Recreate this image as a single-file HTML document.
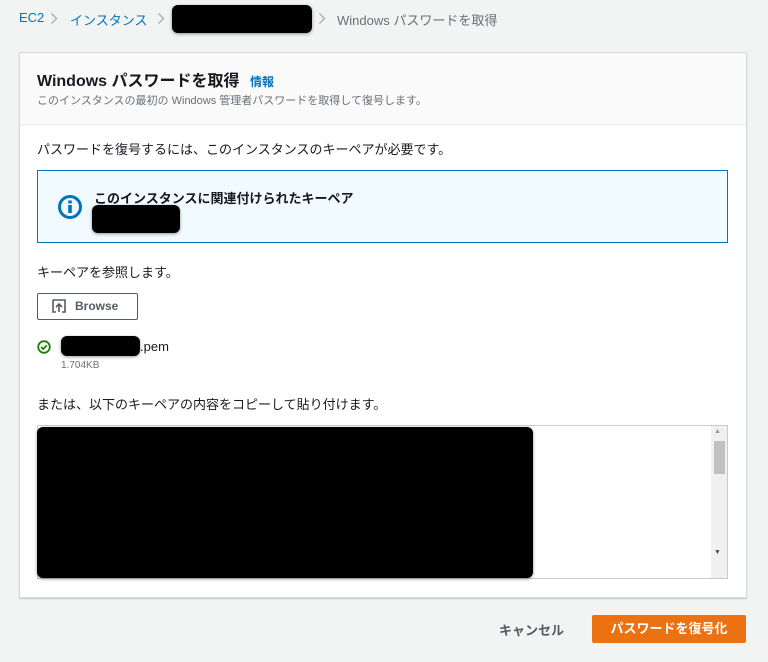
<!DOCTYPE html>
<html><head><meta charset="utf-8"><style>
*{box-sizing:border-box;margin:0;padding:0}
body{width:768px;height:662px;background:#f2f3f3;font-family:"Liberation Sans","Noto Sans CJK JP",sans-serif;color:#16191f;position:relative;overflow:hidden}
.a{position:absolute;white-space:nowrap}
.blk{position:absolute;background:#000;border-radius:6px;box-shadow:0 1px 3px rgba(0,0,0,.4)}
</style></head><body>
<div class="a" style="left:19px;top:10px;font-size:13px;color:#0073bb">EC2</div>
<svg class="a" style="left:50px;top:12px" width="8" height="13" viewBox="0 0 8 13"><path d="M1.5 1.5l5 5-5 5" fill="none" stroke="#aab7b8" stroke-width="1.5"/></svg>
<div class="a" style="left:70px;top:10px;font-size:13px;color:#0073bb">インスタンス</div>
<svg class="a" style="left:157px;top:12px" width="8" height="13" viewBox="0 0 8 13"><path d="M1.5 1.5l5 5-5 5" fill="none" stroke="#aab7b8" stroke-width="1.5"/></svg>
<div class="blk" style="left:172px;top:5px;width:140px;height:28px"></div>
<svg class="a" style="left:318px;top:12px" width="8" height="13" viewBox="0 0 8 13"><path d="M1.5 1.5l5 5-5 5" fill="none" stroke="#aab7b8" stroke-width="1.5"/></svg>
<div class="a" style="left:337px;top:10px;font-size:13px;color:#687078">Windows パスワードを取得</div>

<div class="a" style="left:19px;top:52px;width:728px;height:546px;background:#fff;border:1px solid #d5dbdb;box-shadow:0 1px 1px rgba(0,28,36,.2)">
 <div style="height:72px;background:#fafafa;border-bottom:1px solid #eaeded"></div>
</div>
<div class="a" style="left:37px;top:67px;font-size:16px;font-weight:bold">Windows パスワードを取得 <span style="font-size:12px;color:#0073bb;margin-left:6px">情報</span></div>
<div class="a" style="left:37px;top:92px;font-size:11px;color:#687078">このインスタンスの最初の Windows 管理者パスワードを取得して復号します。</div>

<div class="a" style="left:37px;top:139px;font-size:13px">パスワードを復号するには、このインスタンスのキーペアが必要です。</div>
<div class="a" style="left:37px;top:170px;width:691px;height:73px;background:#f1faff;border:1px solid #0073bb"></div>
<svg class="a" style="left:57px;top:194px" width="26" height="26" viewBox="0 0 26 26"><circle cx="13" cy="13" r="10.5" fill="none" stroke="#0073bb" stroke-width="3"/><rect x="11.2" y="11" width="3.6" height="8" fill="#0073bb"/><rect x="11.2" y="6.5" width="3.6" height="3" fill="#0073bb"/></svg>
<div class="a" style="left:94px;top:188px;font-size:13px;font-weight:bold">このインスタンスに関連付けられたキーペア</div>
<div class="blk" style="left:92px;top:205px;width:88px;height:28px"></div>

<div class="a" style="left:37px;top:262px;font-size:13px">キーペアを参照します。</div>
<div class="a" style="left:37px;top:293px;width:101px;height:27px;border:1px solid #545b64;border-radius:2px;background:#fff"></div>
<svg class="a" style="left:52px;top:299px" width="14" height="14" viewBox="0 0 14 14"><path d="M1 1h12v12h-3M4 13H1V1" fill="none" stroke="#545b64" stroke-width="1.6"/><path d="M7 13V5M4 8l3-3 3 3" fill="none" stroke="#545b64" stroke-width="1.6"/></svg>
<div class="a" style="left:75px;top:299px;font-size:12px;font-weight:bold;color:#545b64">Browse</div>

<svg class="a" style="left:37px;top:340px" width="14" height="14" viewBox="0 0 14 14"><circle cx="7" cy="7" r="5.8" fill="none" stroke="#1d8102" stroke-width="1.8"/><path d="M4.2 7l2 2 3.6-3.6" fill="none" stroke="#1d8102" stroke-width="1.8"/></svg>
<div class="blk" style="left:61px;top:336px;width:79px;height:20px"></div>
<div class="a" style="left:140px;top:339px;font-size:13px">.pem</div>
<div class="a" style="left:61px;top:360px;font-size:10px;color:#687078">1.704KB</div>

<div class="a" style="left:37px;top:394px;font-size:13px">または、以下のキーペアの内容をコピーして貼り付けます。</div>
<div class="a" style="left:37px;top:425px;width:691px;height:154px;border:1px solid #c6cccc;background:#fff"></div>
<div class="a" style="left:711px;top:426px;width:16px;height:152px;background:#f0f0f0"></div>
<div class="a" style="left:714px;top:441px;width:11px;height:33px;background:#c1c1c1"></div>
<div class="a" style="left:714px;top:428px;font-size:7px;color:#999">▲</div>
<div class="a" style="left:714px;top:549px;font-size:7px;color:#505050">▼</div>
<div class="blk" style="left:37px;top:427px;width:496px;height:151px"></div>

<div class="a" style="left:499px;top:620px;font-size:13px;font-weight:bold;color:#545b64">キャンセル</div>
<div class="a" style="left:592px;top:615px;width:154px;height:28px;background:#ec7211;border-radius:2px;color:#fff;font-size:13px;font-weight:bold;text-align:center;line-height:28px">パスワードを復号化</div>
</body></html>
